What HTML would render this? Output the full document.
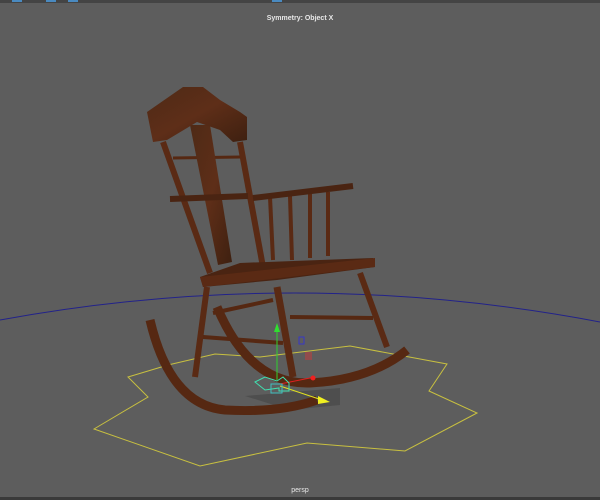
<!DOCTYPE html>
<html><head><style>
html,body{margin:0;padding:0;width:600px;height:500px;overflow:hidden;background:#5d5d5d;font-family:"Liberation Sans",sans-serif}
.t{position:absolute;left:0;width:600px;text-align:center;color:#e8e8e8;font-size:7px;font-weight:bold}
</style></head><body>
<svg width="600" height="500" style="position:absolute;left:0;top:0">
<defs>
<linearGradient id="w" x1="0" y1="0" x2="1" y2="1"><stop offset="0" stop-color="#4e2a16"/><stop offset=".5" stop-color="#5e2e18"/><stop offset="1" stop-color="#3e2010"/></linearGradient>
</defs>
<rect x="0" y="0" width="600" height="3" fill="#444"/>
<rect x="12" y="0" width="10" height="2" fill="#4a8ac0"/>
<rect x="46" y="0" width="10" height="2" fill="#4a8ac0"/>
<rect x="68" y="0" width="10" height="2" fill="#4a8ac0"/>
<rect x="272" y="0" width="10" height="2" fill="#4a8ac0"/>
<rect x="0" y="497" width="600" height="3" fill="#3a3a3a"/>
<path d="M0,320 Q300,265 600,322" stroke="#22228a" stroke-width="1" fill="none"/>
<polygon points="94,429 148,397 128,377 168,365 215,354 260,357 350,346 447,364 429,391 477,413 405,451 307,443 200,466" fill="none" stroke="#c8c040" stroke-width="1"/>
<polygon points="245,396 340,388 340,405 290,410" fill="#4e4e4e"/>
<path d="M217,307 Q250,385 310,383 Q370,380 407,350" stroke="#562812" stroke-width="9" fill="none"/>
<line x1="360" y1="273" x2="387" y2="347" stroke="#5a2a14" stroke-width="6"/>
<line x1="290" y1="317" x2="373" y2="318" stroke="#562812" stroke-width="4"/>
<line x1="213" y1="313" x2="273" y2="300" stroke="#562812" stroke-width="4"/>
<line x1="163" y1="142" x2="210" y2="273" stroke="#5a2a14" stroke-width="6"/>
<line x1="240" y1="142" x2="263" y2="267" stroke="#5a2a14" stroke-width="6"/>
<line x1="173" y1="158" x2="240" y2="157" stroke="#562812" stroke-width="3"/>
<polygon points="190,125 210,125 232,262 218,265" fill="url(#w)"/>
<polygon points="147,112 183,87 203,87 220,100 240,112 247,117 247,140 233,142 220,130 197,122 167,140 153,142" fill="url(#w)"/>
<line x1="270" y1="197" x2="273" y2="260" stroke="#5a2a14" stroke-width="4"/>
<line x1="290" y1="196" x2="292" y2="260" stroke="#5a2a14" stroke-width="4"/>
<line x1="310" y1="194" x2="310" y2="258" stroke="#5a2a14" stroke-width="4"/>
<line x1="328" y1="192" x2="328" y2="256" stroke="#5a2a14" stroke-width="4"/>
<line x1="253" y1="198" x2="353" y2="186" stroke="#4a2412" stroke-width="6"/>
<line x1="170" y1="199" x2="248" y2="196" stroke="#4a2412" stroke-width="6"/>
<polygon points="200,277 240,263 373,258 375,267 277,280 203,287" fill="#4a2412"/>
<polygon points="200,277 375,258 375,267 203,287" fill="#5a2a14"/>
<line x1="207" y1="287" x2="195" y2="377" stroke="#5a2a14" stroke-width="6"/>
<line x1="277" y1="287" x2="293" y2="377" stroke="#5a2a14" stroke-width="7"/>
<line x1="203" y1="337" x2="283" y2="343" stroke="#562812" stroke-width="4"/>
<path d="M150,320 Q170,405 225,410 Q280,413 317,400" stroke="#562812" stroke-width="9" fill="none"/>
<line x1="277" y1="380" x2="277" y2="330" stroke="#30d030" stroke-width="1"/>
<polygon points="274,332 280,332 277,323" fill="#30e030"/>
<line x1="280" y1="384" x2="315" y2="377" stroke="#e02020" stroke-width="1"/>
<circle cx="313" cy="378" r="2.5" fill="#f02020"/>
<line x1="280" y1="386" x2="322" y2="400" stroke="#e0e020" stroke-width="1"/>
<polygon points="318,396 330,402 318,404" fill="#f0f020"/>
<rect x="299" y="337" width="5" height="7" fill="none" stroke="#3838c8"/>
<rect x="305" y="352" width="7" height="8" fill="#a04848" opacity=".8"/>
<path d="M255,382 l10,-5 l12,4 l6,-4 l6,6 v8 h-10 v-3 l-14,2 z" fill="none" stroke="#40e0b0" stroke-width="1"/>
<rect x="271" y="384" width="11" height="9" fill="none" stroke="#40c0c0"/>
</svg>
<div class="t" style="top:15px">Symmetry: Object X</div>
<div class="t" style="top:487px;font-weight:normal">persp</div>
</body></html>
